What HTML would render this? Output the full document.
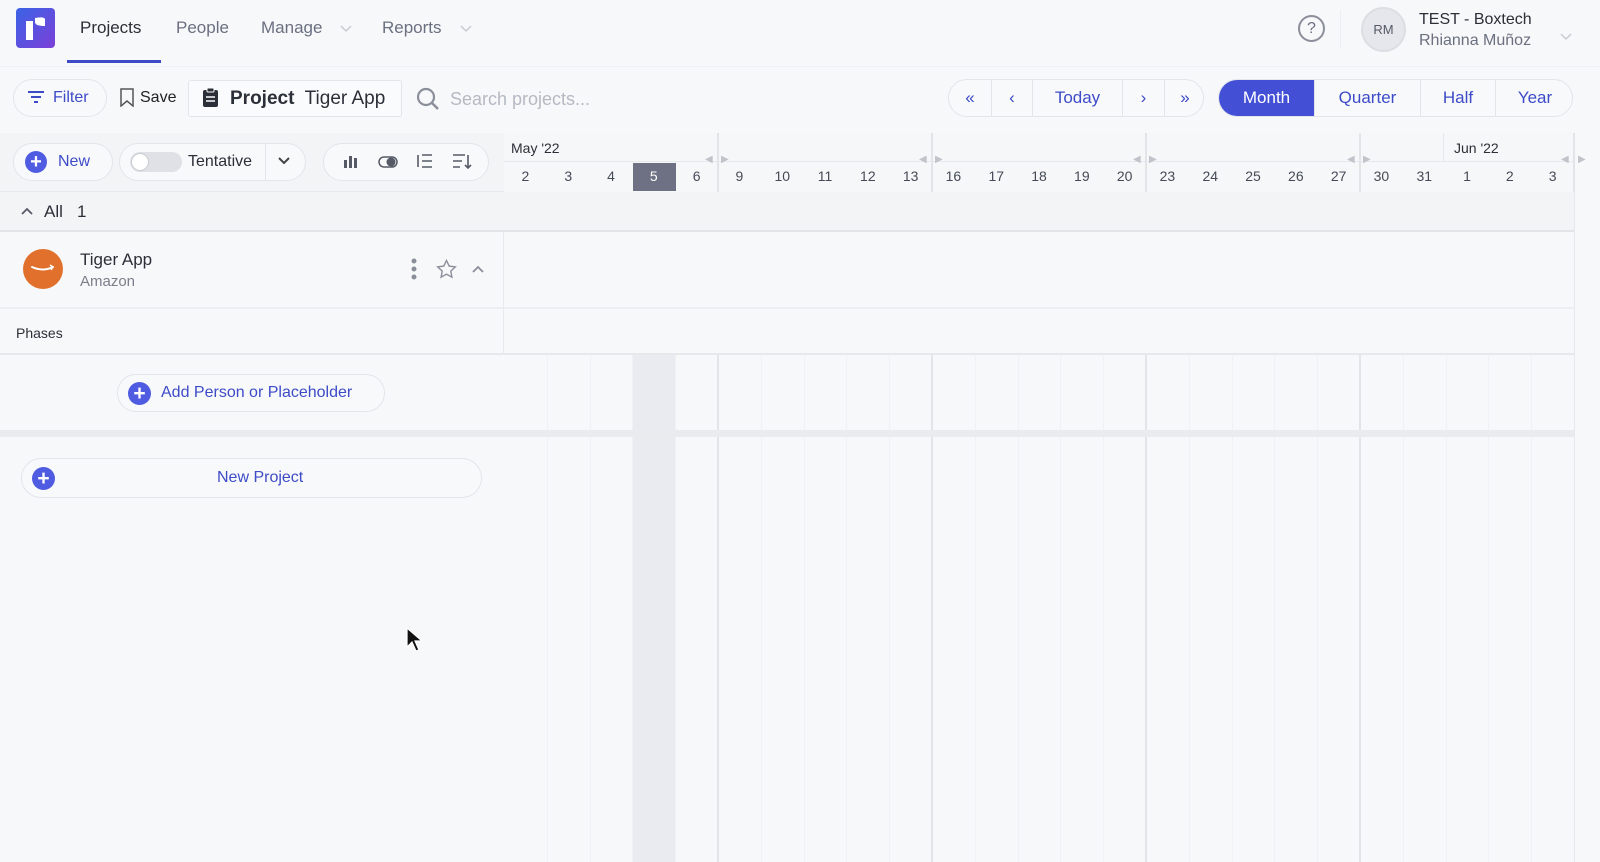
<!DOCTYPE html>
<html><head><meta charset="utf-8">
<style>
*{box-sizing:border-box;margin:0;padding:0}
body{width:1600px;height:862px;overflow:hidden;background:#f7f8fa;font-family:"Liberation Sans",Arial,sans-serif;color:#2b2f38;position:relative}
.a{position:absolute}
.nav{font-size:17px;color:#6b7080;top:18px}
.btn{position:absolute;border:1px solid #e3e5ea;border-radius:20px;background:#f8f9fb}
.blue{color:#3d4bc7}
.seg{position:absolute;top:0;height:100%;display:flex;align-items:center;justify-content:center;border-left:1px solid #e3e5ea;color:#3d4bc7;font-size:17px}
.day{position:absolute;top:161px;height:31px;width:42.86px;text-align:center;font-size:14px;line-height:31px;color:#444a56}
.vl{position:absolute;width:1px;background:#f0f1f4}
.wl{position:absolute;width:2px;background:#e2e4e8}
.plus{position:absolute;border-radius:50%;background:#4f5be0;color:#fff;text-align:center;font-weight:bold}
</style></head><body>
<!-- top nav -->
<div class="a" style="left:16px;top:8px;width:39px;height:40px;border-radius:4px;background:linear-gradient(135deg,#3b63e6,#7b3fd8)">
<svg width="39" height="40" viewBox="0 0 39 40"><path d="M10 13 h7 v19 h-7z M19 10 c0 0 9 -2 10 1 v7 c-6 0 -10 -1 -10 -4z" fill="#fff"/></svg></div>
<div class="a nav" style="left:80px;color:#2b2f38">Projects</div>
<div class="a" style="left:67px;top:60px;width:94px;height:3px;background:#3d4bc7"></div>
<div class="a nav" style="left:176px">People</div>
<div class="a nav" style="left:261px">Manage</div>
<svg class="a" style="left:340px;top:25px" width="12" height="8"><path d="M1 1l5 5 5-5" fill="none" stroke="#c3c6cf" stroke-width="1.3"/></svg>
<div class="a nav" style="left:382px">Reports</div>
<svg class="a" style="left:460px;top:25px" width="12" height="8"><path d="M1 1l5 5 5-5" fill="none" stroke="#c3c6cf" stroke-width="1.3"/></svg>
<div class="a" style="left:1298px;top:15px;width:27px;height:27px;border:2px solid #8a8f9a;border-radius:50%;text-align:center;font-size:16px;line-height:23px;color:#6b7080">?</div>
<div class="a" style="left:1340px;top:10px;width:1px;height:38px;background:#eceef2"></div>
<div class="a" style="left:1361px;top:7px;width:45px;height:45px;border-radius:50%;background:#e6e7ec;border:2px solid #dcdee3;text-align:center;line-height:41px;font-size:13px;color:#555a66">RM</div>
<div class="a" style="left:1419px;top:11px;font-size:16px;color:#2b2f38">TEST - Boxtech</div>
<div class="a" style="left:1419px;top:32px;font-size:16px;color:#6b7080">Rhianna Muñoz</div>
<svg class="a" style="left:1560px;top:33px" width="12" height="8"><path d="M1 1l5 5 5-5" fill="none" stroke="#c3c6cf" stroke-width="1.3"/></svg>
<div class="a" style="left:0;top:66px;width:1600px;height:1px;background:#eef0f3"></div>

<!-- toolbar -->
<div class="btn" style="left:13px;top:79px;width:94px;height:38px"></div>
<svg class="a" style="left:27px;top:89px" width="18" height="16"><path d="M1 3h16M4 8h10M7 13h4" stroke="#3d4bc7" stroke-width="2"/></svg>
<div class="a blue" style="left:53px;top:89px;font-size:16px">Filter</div>
<svg class="a" style="left:120px;top:88px" width="14" height="19"><path d="M1 1h12v17l-6-5-6 5z" fill="none" stroke="#555" stroke-width="1.5"/></svg>
<div class="a" style="left:140px;top:89px;font-size:16px;color:#222">Save</div>
<div class="a" style="left:188px;top:80px;width:214px;height:37px;border:1px solid #e3e5ea;border-radius:3px;background:#fafbfc"></div>
<svg class="a" style="left:202px;top:87px" width="17" height="21"><rect x="1" y="3" width="15" height="17" rx="2" fill="#2b2f38"/><rect x="5" y="1" width="7" height="4" rx="1" fill="#2b2f38" stroke="#fafbfc"/><path d="M4 10h9M4 14h9" stroke="#fff" stroke-width="1.6"/></svg>
<div class="a" style="left:230px;top:88px;font-size:19px;color:#2b2f38"><b style="font-weight:600">Project</b>&nbsp; Tiger App</div>
<svg class="a" style="left:416px;top:87px" width="24" height="24"><circle cx="10" cy="10" r="8" fill="none" stroke="#8a8f9a" stroke-width="2.2"/><path d="M16 16l6 6" stroke="#8a8f9a" stroke-width="2.5"/></svg>
<div class="a" style="left:450px;top:89px;font-size:18px;color:#b5b9c3">Search projects...</div>

<div class="btn" style="left:948px;top:79px;width:256px;height:38px;overflow:hidden">
<div class="seg" style="left:0;width:42px;border:0">&#171;</div>
<div class="seg" style="left:42px;width:41px">&#8249;</div>
<div class="seg" style="left:83px;width:90px">Today</div>
<div class="seg" style="left:173px;width:42px">&#8250;</div>
<div class="seg" style="left:215px;width:41px">&#187;</div>
</div>
<div class="btn" style="left:1218px;top:79px;width:355px;height:38px;overflow:hidden">
<div class="seg" style="left:0;width:95px;border:0;background:#4350d5;color:#fff">Month</div>
<div class="seg" style="left:95px;width:106px">Quarter</div>
<div class="seg" style="left:201px;width:75px">Half</div>
<div class="seg" style="left:276px;width:79px">Year</div>
</div>

<!-- second bar -->
<div class="a" style="left:0;top:133px;width:1574px;height:59px;background:#f3f4f6;border-bottom:1px solid #e6e8ec"></div>
<div class="btn" style="left:13px;top:143px;width:100px;height:38px"></div>
<div class="plus" style="left:25px;top:151px;width:22px;height:22px;font-size:20px;line-height:22px">+</div>
<div class="a blue" style="left:58px;top:153px;font-size:16px">New</div>
<div class="btn" style="left:119px;top:143px;width:187px;height:38px"></div>
<div class="a" style="left:130px;top:152px;width:52px;height:20px;border-radius:10px;background:#dfe1e6"></div>
<div class="a" style="left:131px;top:153px;width:18px;height:18px;border-radius:50%;background:#fff;border:1px solid #c9ccd3"></div>
<div class="a" style="left:188px;top:153px;font-size:16px;color:#2b2f38">Tentative</div>
<div class="a" style="left:265px;top:144px;width:1px;height:36px;background:#e3e5ea"></div>
<svg class="a" style="left:277px;top:156px" width="14" height="10"><path d="M2 2l5 5 5-5" fill="none" stroke="#444" stroke-width="2"/></svg>
<div class="btn" style="left:323px;top:143px;width:166px;height:38px"></div>
<svg class="a" style="left:343px;top:153px" width="16" height="16"><rect x="1" y="7" width="3" height="8" fill="#555a66"/><rect x="6" y="3" width="3" height="12" fill="#555a66"/><rect x="11" y="5" width="3" height="10" fill="#555a66"/></svg>
<svg class="a" style="left:378px;top:156px" width="20" height="12"><rect x="1" y="1" width="18" height="10" rx="5" fill="none" stroke="#555a66" stroke-width="1.5"/><circle cx="13" cy="6" r="4.5" fill="#555a66"/></svg>
<svg class="a" style="left:416px;top:153px" width="18" height="16"><path d="M2 2v12M6 2h10M6 8h10M6 14h10" stroke="#555a66" stroke-width="1.6"/></svg>
<svg class="a" style="left:452px;top:153px" width="20" height="17"><path d="M1 2h12M1 8h9M1 14h7M16 2v13M13 12l3 3 3-3" fill="none" stroke="#555a66" stroke-width="1.6"/></svg>

<!-- timeline header -->
<div class="a" style="left:504px;top:133px;width:1070px;height:59px;background:#f6f7f9"></div>
<div class="a" style="left:504px;top:161px;width:1070px;height:1px;background:#e6e8ec"></div>
<div class="a" style="left:511px;top:140px;font-size:14px;color:#2b2f38">May '22</div>
<div class="a" style="left:1454px;top:140px;font-size:14px;color:#2b2f38">Jun '22</div>
<div class="a" style="left:1443px;top:133px;width:1px;height:28px;background:#e6e8ec"></div>
<div class="a" style="left:633px;top:163px;width:43px;height:28px;background:#6e7183"></div>

<!-- left panel rows -->
<div class="a" style="left:0;top:192px;width:1574px;height:40px;background:#f3f4f6;border-bottom:2px solid #e2e4e8"></div>
<svg class="a" style="left:20px;top:206px" width="14" height="10"><path d="M2 8l5-5 5 5" fill="none" stroke="#555a66" stroke-width="1.8"/></svg>
<div class="a" style="left:44px;top:202px;font-size:17px;color:#2b2f38">All &nbsp;&nbsp;1</div>

<div class="a" style="left:0;top:232px;width:1574px;height:77px;background:#f7f8fa;border-bottom:2px solid #eceef1"></div>
<div class="a" style="left:0;top:309px;width:1574px;height:46px;background:#f7f8fa;border-bottom:2px solid #e6e8ec"></div>
<div class="a" style="left:503px;top:232px;width:1px;height:123px;background:#e8eaee"></div>
<div class="a" style="left:23px;top:249px;width:40px;height:40px;border-radius:50%;background:#e0702b"></div>
<svg class="a" style="left:29px;top:264px" width="28" height="10"><path d="M3 3q11 5 21 0" fill="none" stroke="#fff" stroke-width="2" stroke-linecap="round"/><path d="M21 1l3 2-2 3" fill="none" stroke="#fff" stroke-width="1.4"/></svg>
<div class="a" style="left:80px;top:250px;font-size:17px;color:#2b2f38">Tiger App</div>
<div class="a" style="left:80px;top:273px;font-size:15px;color:#7a7f8a">Amazon</div>
<svg class="a" style="left:410px;top:258px" width="8" height="24"><circle cx="4" cy="3" r="2.5" fill="#8a8f9a"/><circle cx="4" cy="11" r="2.5" fill="#8a8f9a"/><circle cx="4" cy="19" r="2.5" fill="#8a8f9a"/></svg>
<svg class="a" style="left:436px;top:259px" width="21" height="20"><path d="M10.5 1.5l2.7 5.6 6.1.8-4.5 4.2 1.1 6.1-5.4-3-5.4 3 1.1-6.1-4.5-4.2 6.1-.8z" fill="none" stroke="#8a8f9a" stroke-width="1.4"/></svg>
<svg class="a" style="left:471px;top:265px" width="14" height="9"><path d="M2 7l5-5 5 5" fill="none" stroke="#8a8f9a" stroke-width="1.8"/></svg>
<div class="a" style="left:16px;top:325px;font-size:14px;color:#2b2f38">Phases</div>

<div id="days"></div>

<div class="a" style="left:0;top:355px;width:504px;height:75px;background:#f7f8fa"></div>
<div class="btn" style="left:117px;top:374px;width:268px;height:38px"></div>
<div class="plus" style="left:128px;top:382px;width:23px;height:23px;font-size:21px;line-height:23px">+</div>
<div class="a blue" style="left:161px;top:384px;font-size:16px">Add Person or Placeholder</div>

<div class="a" style="left:0;top:430px;width:1574px;height:7px;background:#e9ebee"></div>

<div class="btn" style="left:21px;top:458px;width:461px;height:40px;border-radius:20px"></div>
<div class="plus" style="left:32px;top:467px;width:23px;height:23px;font-size:21px;line-height:23px">+</div>
<div class="a blue" style="left:217px;top:469px;font-size:16px">New Project</div>

<div class="a" style="left:1574px;top:192px;width:1px;height:670px;background:#e6e8ec"></div>

<!-- cursor -->
<svg class="a" style="left:406px;top:627px" width="16" height="26"><path d="M1 1v19l5-5 4 9 3-1-4-9h7z" fill="#111" stroke="#fff" stroke-width="1.2"/></svg>

<script>
var days=[2,3,4,5,6,9,10,11,12,13,16,17,18,19,20,23,24,25,26,27,30,31,1,2,3];
var h='';var w=1070/25;
for(var i=0;i<25;i++){var x=504+i*w;
h+='<div class="day" style="left:'+x+'px;'+(i==3?'color:#fff':'')+'">'+days[i]+'</div>';
if(i==3){h+='<div class="a" style="left:'+x+'px;top:355px;width:'+w+'px;height:75px;background:#e9ebf0"></div><div class="a" style="left:'+x+'px;top:437px;width:'+w+'px;height:425px;background:#e9ebf0"></div>';}
if(i>0){if(i%5==0){h+='<div class="wl" style="left:'+(x-1)+'px;top:133px;height:59px"></div><div class="wl" style="left:'+(x-1)+'px;top:355px;height:507px"></div>';
h+='<div class="a" style="left:'+(x-13)+'px;top:154px;font-size:10px;color:#c0c3ca">&#9664;</div><div class="a" style="left:'+(x+3)+'px;top:154px;font-size:10px;color:#c0c3ca">&#9654;</div>';}
else h+='<div class="vl" style="left:'+x+'px;top:355px;height:507px"></div>';}
}
h+='<div class="wl" style="left:1573px;top:133px;height:59px"></div><div class="a" style="left:1561px;top:154px;font-size:10px;color:#c0c3ca">&#9664;</div><div class="a" style="left:1578px;top:154px;font-size:10px;color:#c0c3ca">&#9654;</div>';
document.getElementById('days').innerHTML=h;
</script>
</body></html>
